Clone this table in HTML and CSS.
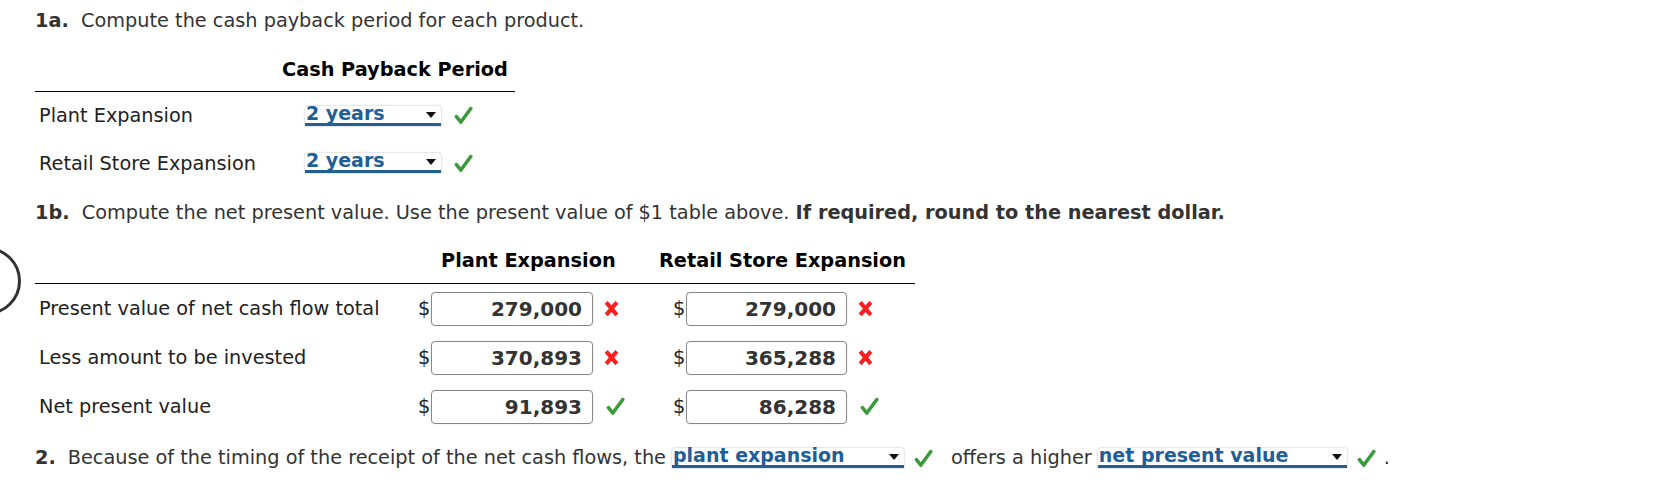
FILE: index.html
```html
<!DOCTYPE html>
<html>
<head>
<meta charset="utf-8">
<link rel="stylesheet" href="styles.css">
</head>
<body>
<div class="ring"></div>
<div class="page">
  <p class="prompt p1a"><b>1a.</b>&nbsp; Compute the cash payback period for each product.</p>

  <div class="t1">
    <div class="t1-head"><span></span><span class="hd hd-cpp">Cash Payback Period</span></div>
    <div class="t1-row">
      <span class="lbl">Plant Expansion</span>
      <span class="cell">
        <span class="dd dd-years"><span class="dd-text">2 years</span><span class="arrow"></span></span>
        <svg class="ok" viewBox="0 0 18 18"><path d="M2.3 10 L6.5 15.2 L15.9 2.4" /></svg>
      </span>
    </div>
    <div class="t1-row">
      <span class="lbl">Retail Store Expansion</span>
      <span class="cell">
        <span class="dd dd-years"><span class="dd-text">2 years</span><span class="arrow"></span></span>
        <svg class="ok" viewBox="0 0 18 18"><path d="M2.3 10 L6.5 15.2 L15.9 2.4" /></svg>
      </span>
    </div>
  </div>

  <p class="prompt p1b"><b>1b.</b>&nbsp; Compute the net present value. Use the present value of $1 table above. <b>If required, round to the nearest dollar.</b></p>

  <div class="t2">
    <div class="t2-head">
      <span></span>
      <span class="hd hd-pe">Plant Expansion</span>
      <span class="hd hd-rse">Retail Store Expansion</span>
    </div>
    <div class="t2-row">
      <span class="lbl">Present value of net cash flow total</span>
      <span class="cell"><span class="dol">$</span><span class="box">279,000</span><svg class="bad" viewBox="0 0 16 16"><path d="M3 2.2 L13 14 M13 2.2 L3 14" /></svg></span>
      <span class="cell cell-r"><span class="dol">$</span><span class="box box-r">279,000</span><svg class="bad" viewBox="0 0 16 16"><path d="M3 2.2 L13 14 M13 2.2 L3 14" /></svg></span>
    </div>
    <div class="t2-row">
      <span class="lbl">Less amount to be invested</span>
      <span class="cell"><span class="dol">$</span><span class="box">370,893</span><svg class="bad" viewBox="0 0 16 16"><path d="M3 2.2 L13 14 M13 2.2 L3 14" /></svg></span>
      <span class="cell cell-r"><span class="dol">$</span><span class="box box-r">365,288</span><svg class="bad" viewBox="0 0 16 16"><path d="M3 2.2 L13 14 M13 2.2 L3 14" /></svg></span>
    </div>
    <div class="t2-row">
      <span class="lbl">Net present value</span>
      <span class="cell"><span class="dol">$</span><span class="box">91,893</span><svg class="ok" viewBox="0 0 18 18"><path d="M2.3 10 L6.5 15.2 L15.9 2.4" /></svg></span>
      <span class="cell cell-r"><span class="dol">$</span><span class="box box-r">86,288</span><svg class="ok" viewBox="0 0 18 18"><path d="M2.3 10 L6.5 15.2 L15.9 2.4" /></svg></span>
    </div>
  </div>

  <p class="prompt p2"><b class="num">2.</b><span>Because of the timing of the receipt of the net cash flows, the</span>
    <span class="dd dd-plant"><span class="dd-text">plant expansion</span><span class="arrow"></span></span>
    <svg class="ok ok-inline ok-first" viewBox="0 0 18 18"><path d="M2.3 10 L6.5 15.2 L15.9 2.4" /></svg>
    <span>offers a higher</span>
    <span class="dd dd-npv"><span class="dd-text">net present value</span><span class="arrow"></span></span>
    <svg class="ok ok-inline ok-last" viewBox="0 0 18 18"><path d="M2.3 10 L6.5 15.2 L15.9 2.4" /></svg>
    <span class="dot">.</span>
  </p>
</div>
</body>
</html>
```

FILE: styles.css
```css
html, body {
  margin: 0;
  padding: 0;
  background: #fff;
}
body {
  width: 1654px;
  height: 498px;
  overflow: hidden;
  position: relative;
  font-family: "DejaVu Sans", Verdana, sans-serif;
  font-size: 19.3px;
  color: #222;
}
.page {
  padding-left: 35px;
}
.ring {
  position: absolute;
  left: -47px;
  top: 247px;
  width: 62px;
  height: 62px;
  border: 3px solid #333;
  border-radius: 50%;
}
.prompt {
  margin: 0;
  line-height: 24px;
  color: #333;
  white-space: nowrap;
}
.prompt b { color: #333; }
.p1a { padding-top: 9px; }
.p1b { margin-top: 14px; }
.p2 { margin-top: 15px; display: flex; align-items: center; }
.p2 > span { margin-right: 6px; }
.p2 .num { margin-right: 12px; }

.hd {
  font-weight: bold;
  color: #000;
}
.lbl { padding-left: 4px; }

/* table 1a */
.t1 {
  width: 480px;
  margin-top: 25px;
}
.t1-head {
  display: grid;
  grid-template-columns: 247px 1fr;
  line-height: 24px;
  padding-bottom: 9px;
  border-bottom: 1.5px solid #000;
}
.t1-row {
  display: grid;
  grid-template-columns: 270px 1fr;
  align-items: center;
  height: 47.5px;
}
.cell {
  display: flex;
  align-items: center;
}

/* dropdown */
.dd {
  position: relative;
  display: inline-flex;
  align-items: flex-end;
  height: 20px;
  background: #fff;
  border-radius: 3px 3px 0 0;
  box-shadow: 0 0 2px rgba(0,0,0,0.35);
  border-bottom: 3px solid #245f8f;
  box-sizing: border-box;
  font-size: 19px;
}
.dd-text {
  font-weight: bold;
  color: #1f5e96;
  line-height: 19px;
  padding-left: 1px;
}
.arrow {
  position: absolute;
  right: 5px;
  top: 6px;
  width: 0;
  height: 0;
  border-left: 5px solid transparent;
  border-right: 5px solid transparent;
  border-top: 6px solid #111;
}
.dd-years { width: 136px; }
.p2 .dd-plant { width: 232px; margin-right: 0; }
.p2 .dd-npv { width: 249px; margin-right: 0; }

.ok {
  width: 19px;
  height: 19px;
  margin-left: 13px;
  fill: none;
  stroke: #3b9b3b;
  stroke-width: 3.4;
  stroke-linecap: round;
  stroke-linejoin: round;
}
.bad {
  width: 17px;
  height: 17px;
  margin-left: 10px;
  fill: none;
  stroke: #ff1f1f;
  stroke-width: 3.8;
  stroke-linecap: butt;
}

/* table 1b */
.t2 {
  width: 880px;
  margin-top: 24px;
}
.t2-head {
  display: grid;
  grid-template-columns: 383px 255px 242px;
  line-height: 24px;
  padding-bottom: 10px;
  border-bottom: 1.5px solid #000;
}
.hd-pe { padding-left: 23px; }
.hd-rse { margin-left: -14px; }
.t2-row {
  display: grid;
  grid-template-columns: 383px 255px 242px;
  align-items: center;
  height: 49px;
}
.dol {
  width: 13px;
  color: #222;
}
.box {
  width: 162px;
  height: 34px;
  box-sizing: border-box;
  border: 1px solid #888;
  border-radius: 4px;
  box-shadow: 0 0 1px rgba(0,0,0,0.25);
  text-align: right;
  padding-right: 10px;
  font-weight: bold;
  font-size: 20px;
  color: #333;
  line-height: 32px;
}
.box-r { width: 161px; }
.ok-inline { margin-left: 10px; margin-right: 14px; }
.ok-first { margin-right: 18px; }
.ok-last { margin-right: 8px; }
.dot { margin-left: 0; }
```
